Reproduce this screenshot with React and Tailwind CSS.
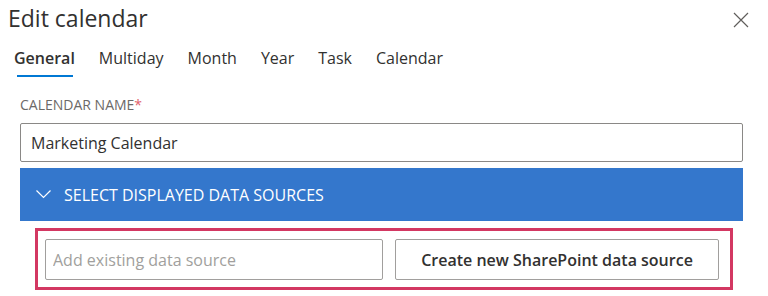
import React, { useState } from 'react';

const tabs = ['General', 'Multiday', 'Month', 'Year', 'Task', 'Calendar'];

function App() {
  const [activeTab, setActiveTab] = useState('General');
  const [calendarName, setCalendarName] = useState('Marketing Calendar');

  return (
    <div className="w-[768px] h-[296px] bg-white text-[#323130] font-['Open_Sans',sans-serif] overflow-hidden">
      <div className="flex items-start justify-between pl-2 pr-[19px] pt-[3px]">
        <h1 className="text-[23px] leading-[30px] font-normal text-[#323130]">Edit calendar</h1>
        <button className="mt-[9px] text-[#605e5c]" title="Close">
          <svg width="16" height="16" viewBox="0 0 16 16" fill="none" stroke="currentColor" strokeWidth="1.2">
            <path d="M1 1L15 15M15 1L1 15" />
          </svg>
        </button>
      </div>

      <div className="flex pl-[14px] mt-[11px] gap-[24px]">
        {tabs.map((tab) => (
          <button
            key={tab}
            onClick={() => setActiveTab(tab)}
            className={
              'relative h-[27px] text-[16px] leading-[22px] ' +
              (activeTab === tab ? 'font-semibold text-[#323130]' : 'text-[#323130]')
            }
          >
            {tab}
            {activeTab === tab && (
              <span className="absolute left-[3px] right-[2px] bottom-[-6px] h-[2px] bg-[#0078d4]" />
            )}
          </button>
        ))}
      </div>

      <div className="pl-5 pr-[25px] mt-[25px]">
        <label className="block text-[14px] leading-[18px] text-[#6b6967] uppercase">
          Calendar name<span className="text-[#e0606c]">*</span>
        </label>
        <input
          className="mt-[9px] block w-full h-[39px] border border-[#8a8886] rounded-[2px] px-[10px] text-[16px] text-[#323130] outline-none"
          value={calendarName}
          onChange={(e) => setCalendarName(e.target.value)}
        />
        <div className="mt-[6px] h-[53px] bg-[#3477cc] flex items-center pl-4 text-white">
          <svg width="15" height="9" viewBox="0 0 15 9" fill="none" stroke="currentColor" strokeWidth="1.2">
            <path d="M0.5 0.5L7.5 7.5L14.5 0.5" />
          </svg>
          <span className="ml-[13px] text-[16px] leading-[20px] uppercase">Select displayed data sources</span>
        </div>
        <div className="ml-[15px] mr-[10px] mt-[7px] h-[62px] border-[3px] border-[#d33862] flex items-start gap-3 pt-[8px] pl-[7px] pr-[11px]">
          <input
            className="w-[338px] h-[41px] border border-[#a19f9d] rounded-[2px] px-[7px] text-[16px] placeholder-[#a19f9d] outline-none"
            placeholder="Add existing data source"
          />
          <button className="flex-1 h-[41px] border border-[#a19f9d] rounded-[2px] text-[16px] font-semibold text-[#323130]">
            Create new SharePoint data source
          </button>
        </div>
      </div>
    </div>
  );
}

export default App;
